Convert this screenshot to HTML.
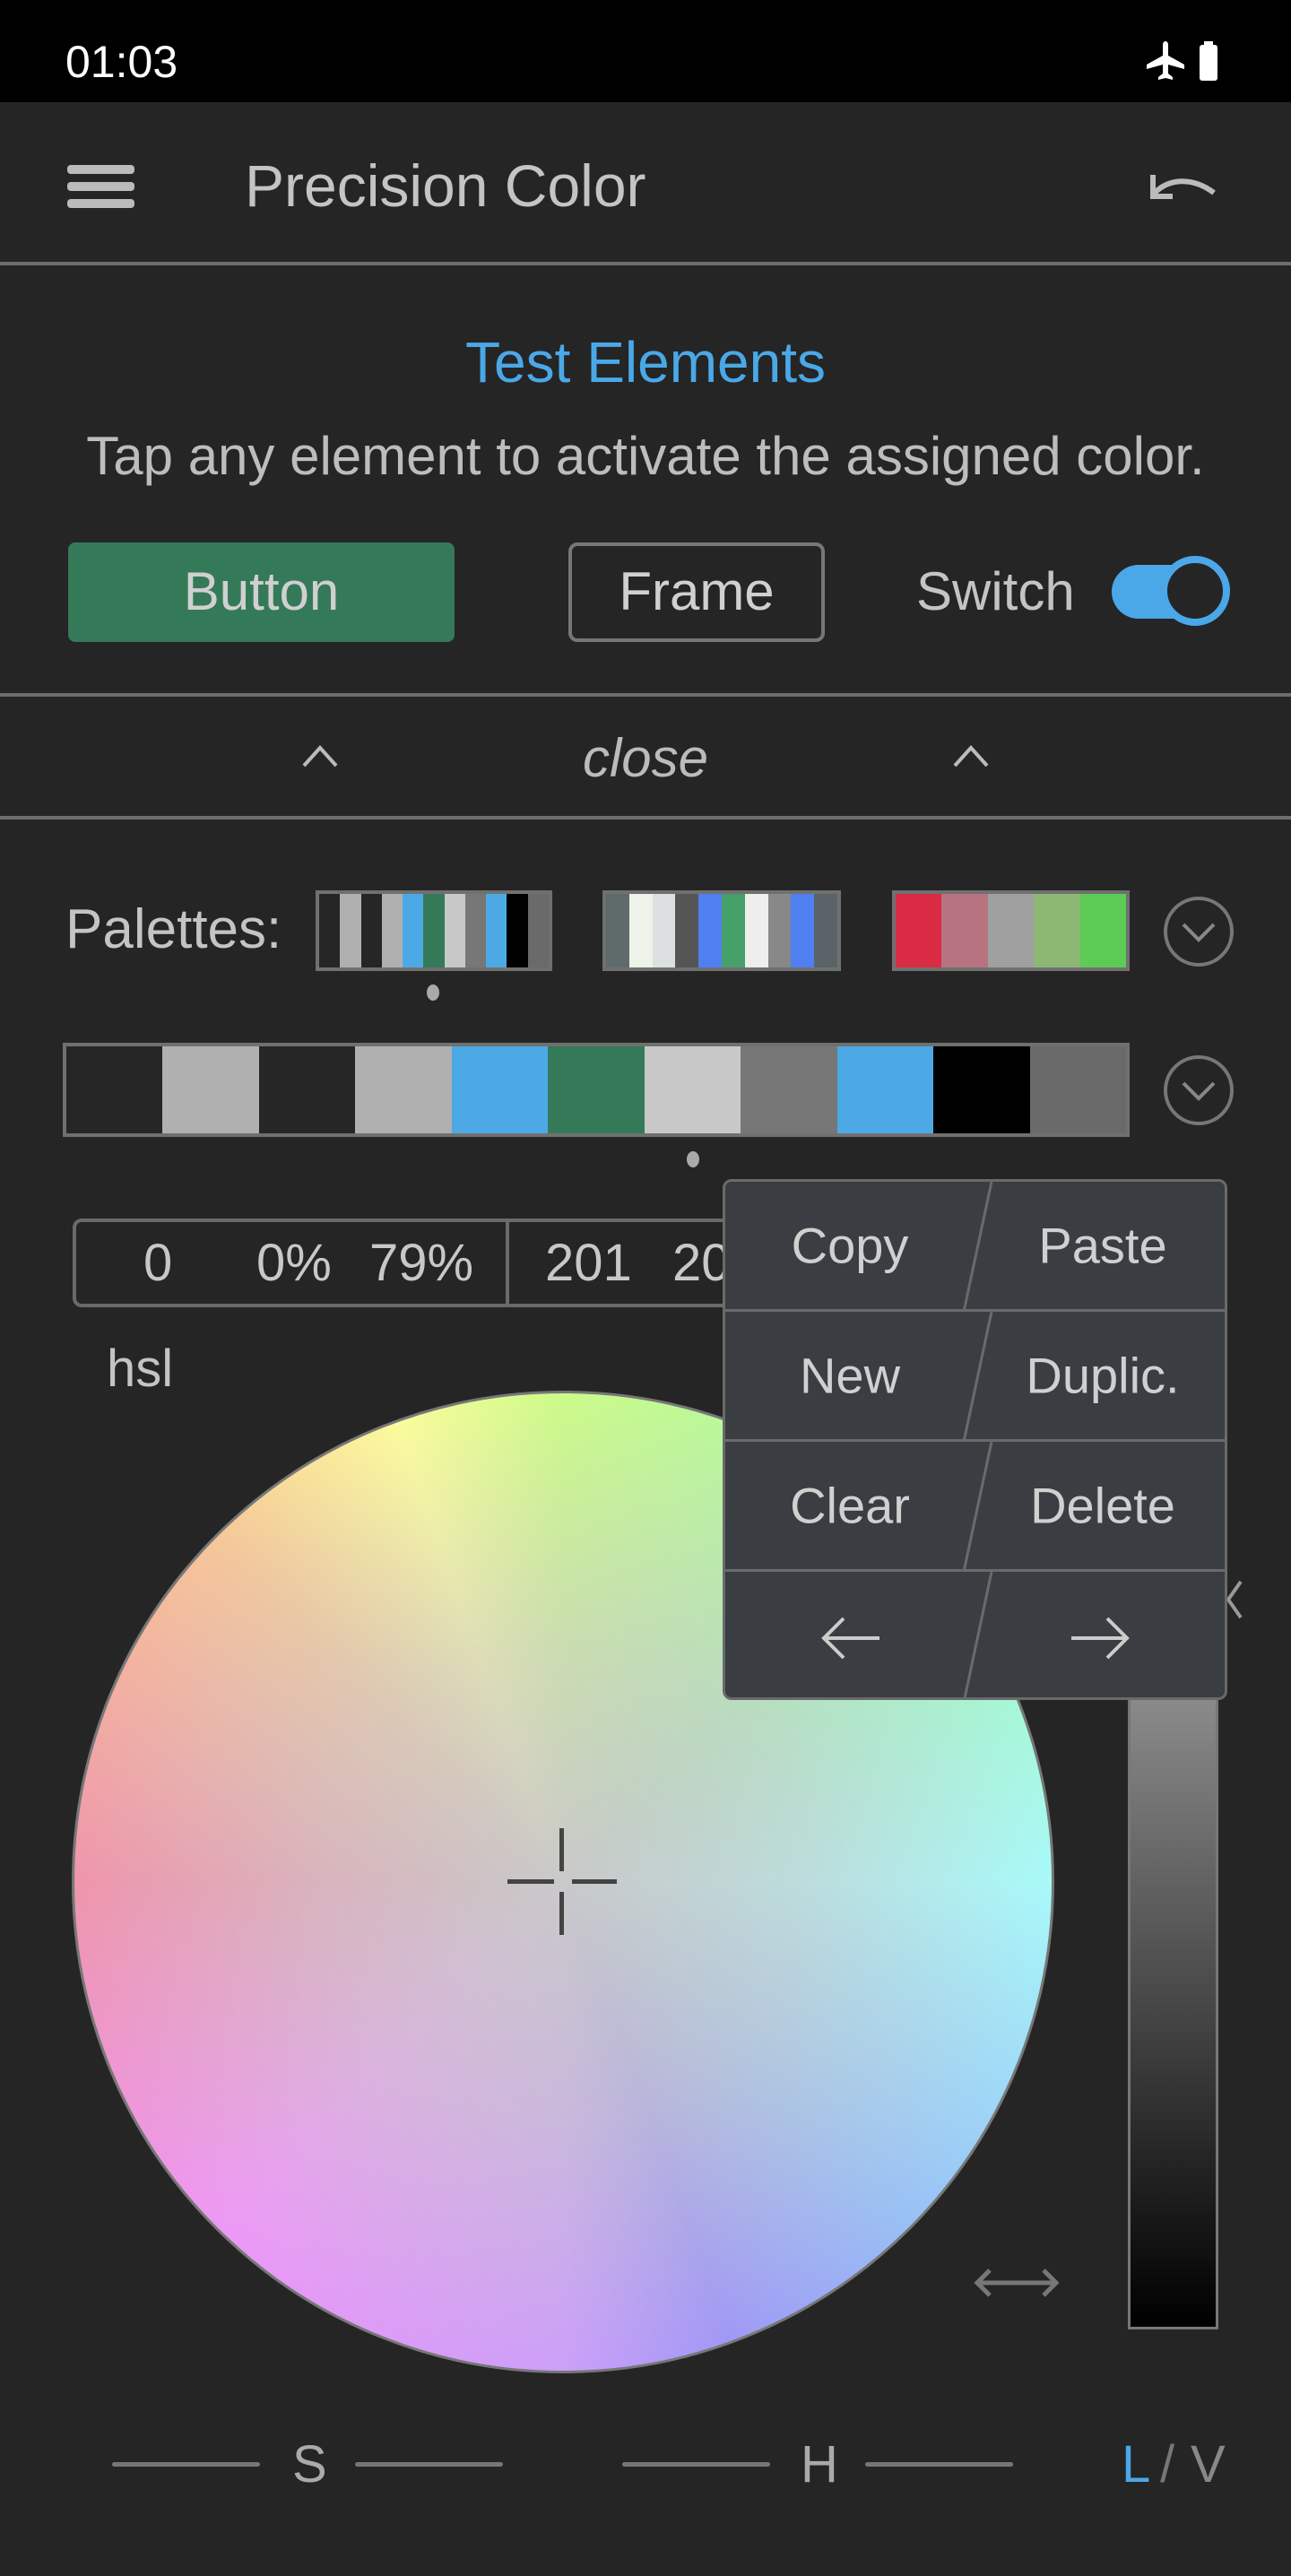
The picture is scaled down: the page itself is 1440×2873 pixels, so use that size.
<!DOCTYPE html>
<html><head><meta charset="utf-8"><style>
*{margin:0;padding:0;box-sizing:border-box}
body{width:1440px;height:2873px;background:#252525;position:relative;overflow:hidden;font-family:"Liberation Sans",sans-serif;color:#c4c4c4}
.a{position:absolute}
.t{position:absolute;white-space:nowrap;line-height:1}
.hl{position:absolute;left:0;width:1440px;height:4px;background:#6e6e6e}
.strip{position:absolute;display:flex;border:4px solid #707070;background:#707070}
.strip div{flex:1}
.circ{position:absolute;width:78px;height:78px;border:4px solid #777;border-radius:50%}
.pop{position:absolute;left:806px;top:1315px;width:563px;height:581px;background:#3a3d42;border:3px solid #6a6a6a;border-radius:10px;overflow:hidden}
.row{position:absolute;left:0;width:100%;height:145px;border-bottom:3px solid #6a6a6a}
.row span{position:absolute;top:50%;transform:translate(-50%,-50%);font-size:56px;color:#d0d0d0}
</style></head><body>
<div class="a" style="left:0;top:0;width:1440px;height:114px;background:#000"></div>
<div class="t" style="left:73px;top:44px;font-size:50px;color:#fff">01:03</div>
<svg class="a" style="left:1278px;top:44px" width="90" height="48" viewBox="0 0 90 48"><path d="M22 2c2 0 3 2 3 4v12l18 10v5l-18-5v10l5 4v3l-8-2-8 2v-3l5-4V28L1 33v-5l18-10V6c0-2 1-4 3-4z" fill="#fff"/><rect x="60" y="6" width="20" height="40" rx="3" fill="#fff"/><rect x="65" y="2" width="10" height="6" fill="#fff"/></svg>
<div class="a" style="left:75px;top:184px;width:75px;height:10px;background:#bbb;border-radius:4px"></div>
<div class="a" style="left:75px;top:203px;width:75px;height:10px;background:#bbb;border-radius:4px"></div>
<div class="a" style="left:75px;top:222px;width:75px;height:10px;background:#bbb;border-radius:4px"></div>
<div class="t" style="left:273px;top:174px;font-size:66px;color:#c4c4c4">Precision Color</div>
<svg class="a" style="left:1278px;top:185px" width="80" height="48" viewBox="0 0 80 48"><path d="M10 30C26 14 52 12 76 30" fill="none" stroke="#bbb" stroke-width="6"/><path d="M8 10L8 34L30 34" fill="none" stroke="#bbb" stroke-width="6"/></svg>
<div class="hl" style="top:292px"></div>
<div class="t" style="left:0;width:1440px;text-align:center;top:372px;font-size:64px;color:#4aa8e8">Test Elements</div>
<div class="t" style="left:0;width:1440px;text-align:center;top:479px;font-size:60px;color:#bdbdbd">Tap any element to activate the assigned color.</div>
<div class="a" style="left:76px;top:605px;width:431px;height:111px;background:#357a58;border-radius:8px"></div>
<div class="t" style="left:76px;width:431px;text-align:center;top:630px;font-size:60px;color:#d0d0d0">Button</div>
<div class="a" style="left:634px;top:605px;width:286px;height:111px;border:4px solid #777;border-radius:10px"></div>
<div class="t" style="left:634px;width:286px;text-align:center;top:630px;font-size:60px;color:#d0d0d0">Frame</div>
<div class="t" style="left:1022px;top:630px;font-size:60px;color:#c4c4c4">Switch</div>
<div class="a" style="left:1240px;top:630px;width:126px;height:60px;background:#4aa8e8;border-radius:30px"></div>
<div class="a" style="left:1294px;top:620px;width:78px;height:78px;background:#252525;border:8px solid #4aa8e8;border-radius:50%"></div>
<div class="hl" style="top:773px"></div>
<svg class="a" style="left:335px;top:828px" width="44" height="30"><path d="M4 26L22 6L40 26" fill="none" stroke="#bbb" stroke-width="4"/></svg>
<svg class="a" style="left:1061px;top:828px" width="44" height="30"><path d="M4 26L22 6L40 26" fill="none" stroke="#bbb" stroke-width="4"/></svg>
<div class="t" style="left:0;width:1440px;text-align:center;top:816px;font-size:60px;font-style:italic;color:#bbb">close</div>
<div class="hl" style="top:910px"></div>
<div class="t" style="left:73px;top:1006px;font-size:62px;color:#c4c4c4">Palettes:</div>
<div class="strip" style="left:352px;top:993px;width:264px;height:90px;padding:0 0 0 0">
<div style="background:#262626"></div><div style="background:#b0b0b0"></div><div style="background:#262626"></div><div style="background:#b0b0b0"></div><div style="background:#4da9e6"></div><div style="background:#357a58"></div><div style="background:#c8c8c8"></div><div style="background:#777"></div><div style="background:#4da9e6"></div><div style="background:#000"></div><div style="background:#6a6a6a"></div></div>
<div class="strip" style="left:672px;top:993px;width:266px;height:90px">
<div style="background:#5f6b6b"></div><div style="background:#eef3ea"></div><div style="background:#dde0e0"></div><div style="background:#555"></div><div style="background:#5080f0"></div><div style="background:#45a06a"></div><div style="background:#eee"></div><div style="background:#888"></div><div style="background:#5080f0"></div><div style="background:#5a6468"></div></div>
<div class="strip" style="left:995px;top:993px;width:265px;height:90px">
<div style="background:#d92c44"></div><div style="background:#b87380"></div><div style="background:#a0a0a0"></div><div style="background:#8db874"></div><div style="background:#5ccc55"></div></div>
<div class="circ" style="left:1298px;top:1000px"></div>
<svg class="a" style="left:1317px;top:1028px" width="40" height="24"><path d="M3 3L20 20L37 3" fill="none" stroke="#888" stroke-width="4"/></svg>
<div class="a" style="left:476px;top:1098px;width:14px;height:18px;border-radius:50%;background:#aaa"></div>
<div class="strip" style="left:70px;top:1163px;width:1190px;height:105px">
<div style="background:#262626"></div><div style="background:#b0b0b0"></div><div style="background:#262626"></div><div style="background:#b0b0b0"></div><div style="background:#4da9e6"></div><div style="background:#357a58"></div><div style="background:#c8c8c8"></div><div style="background:#777"></div><div style="background:#4da9e6"></div><div style="background:#000"></div><div style="background:#6a6a6a"></div></div>
<div class="circ" style="left:1298px;top:1177px"></div>
<svg class="a" style="left:1317px;top:1205px" width="40" height="24"><path d="M3 3L20 20L37 3" fill="none" stroke="#888" stroke-width="4"/></svg>
<div class="a" style="left:766px;top:1284px;width:14px;height:18px;border-radius:50%;background:#aaa"></div>
<div class="a" style="left:81px;top:1359px;width:760px;height:99px;border:4px solid #6a6a6a;border-radius:10px"></div>
<div class="a" style="left:564px;top:1362px;width:4px;height:93px;background:#6a6a6a"></div>
<div class="t" style="left:160px;top:1380px;font-size:58px;color:#c8c8c8">0</div>
<div class="t" style="left:286px;top:1380px;font-size:58px;color:#c8c8c8">0%</div>
<div class="t" style="left:412px;top:1380px;font-size:58px;color:#c8c8c8">79%</div>
<div class="t" style="left:608px;top:1380px;font-size:58px;color:#c8c8c8">201</div>
<div class="t" style="left:750px;top:1380px;font-size:58px;color:#c8c8c8">201</div>
<div class="t" style="left:119px;top:1498px;font-size:58px;color:#c4c4c4">hsl</div>
<div class="a" style="left:80px;top:1551px;width:1096px;height:1096px;border-radius:50%;border:3px solid #777;background:radial-gradient(circle,#c9c9c9 0%,rgba(201,201,201,.6) 35%,rgba(201,201,201,0) 72%),conic-gradient(hsl(85,95%,76%),hsl(130,80%,80%) 45deg,hsl(180,90%,82%) 90deg,hsl(215,85%,78%) 135deg,hsl(245,85%,78%) 160deg,hsl(270,90%,80%) 180deg,hsl(295,85%,78%) 225deg,hsl(345,75%,76%) 270deg,hsl(30,85%,78%) 315deg,hsl(60,95%,80%) 340deg,hsl(85,95%,76%))"></div>
<div class="a" style="left:566px;top:2096px;width:52px;height:5px;background:#444"></div>
<div class="a" style="left:638px;top:2096px;width:50px;height:5px;background:#444"></div>
<div class="a" style="left:624px;top:2039px;width:5px;height:48px;background:#444"></div>
<div class="a" style="left:624px;top:2110px;width:5px;height:48px;background:#444"></div>
<div class="a" style="left:1258px;top:1700px;width:101px;height:898px;border:3px solid #777;background:linear-gradient(#b0b0b0,#000)"></div>
<svg class="a" style="left:1086px;top:2526px" width="96" height="40"><path d="M4 20H92M18 6L4 20L18 34M78 6L92 20L78 34" fill="none" stroke="#777" stroke-width="5"/></svg>
<div class="a" style="left:125px;top:2746px;width:165px;height:5px;background:#777;border-radius:3px"></div>
<div class="a" style="left:396px;top:2746px;width:165px;height:5px;background:#777;border-radius:3px"></div>
<div class="t" style="left:326px;top:2720px;font-size:58px;color:#aaa">S</div>
<div class="a" style="left:694px;top:2746px;width:165px;height:5px;background:#777;border-radius:3px"></div>
<div class="a" style="left:965px;top:2746px;width:165px;height:5px;background:#777;border-radius:3px"></div>
<div class="t" style="left:893px;top:2720px;font-size:58px;color:#aaa">H</div>
<div class="t" style="left:1251px;top:2720px;font-size:58px;color:#4aa8e8">L</div>
<div class="t" style="left:1294px;top:2720px;font-size:58px;color:#777">/</div>
<div class="t" style="left:1328px;top:2720px;font-size:58px;color:#888">V</div>
<svg class="a" style="left:1360px;top:1760px" width="40" height="50"><path d="M24 4L10 24L24 44" fill="none" stroke="#999" stroke-width="4"/></svg>
<div class="pop">
<div class="row" style="top:0"><span style="left:139px">Copy</span><span style="left:421px">Paste</span></div>
<div class="row" style="top:145px"><span style="left:139px">New</span><span style="left:421px">Duplic.</span></div>
<div class="row" style="top:290px"><span style="left:139px">Clear</span><span style="left:421px">Delete</span></div>
<div class="row" style="top:435px;border:0"></div>
<svg class="a" style="left:0;top:0" width="563" height="581"><g stroke="#6a6a6a" stroke-width="3"><path d="M297 0L266 145M297 145L266 290M297 290L266 435M297 435L266 581"/></g><g fill="none" stroke="#ccc" stroke-width="4"><path d="M110 509H172M132 487L110 509L132 531"/><path d="M386 509H448M426 487L448 509L426 531"/></g></svg>
</div>
</body></html>
